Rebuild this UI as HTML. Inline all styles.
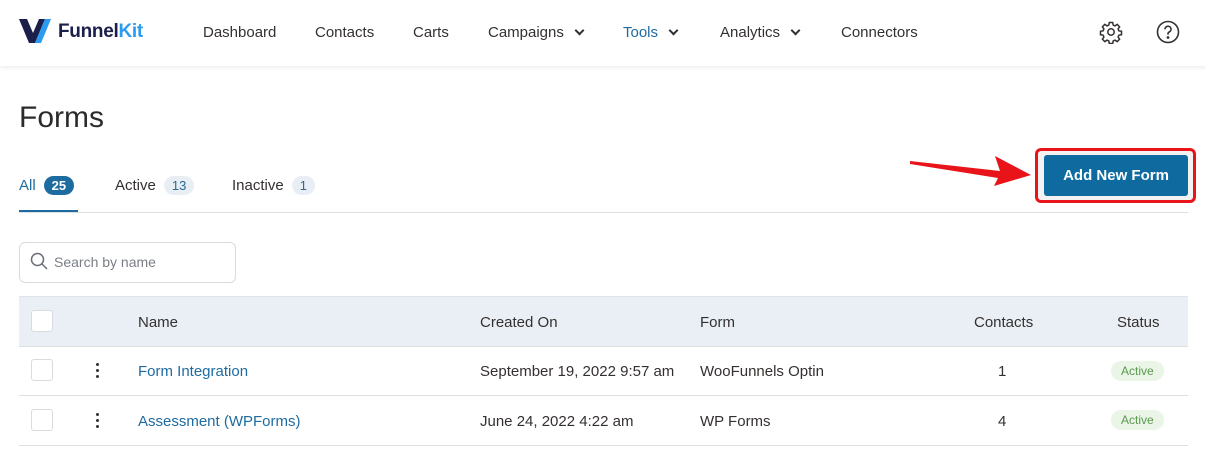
<!DOCTYPE html><html><head><style>
*{box-sizing:border-box;margin:0;padding:0}
body{width:1206px;height:450px;background:#fff;font-family:"Liberation Sans",sans-serif;color:#353030;position:relative;overflow:hidden}
.a{position:absolute}
.hdr{left:0;top:0;width:1206px;height:66px;background:#fff;box-shadow:0 2px 4px rgba(0,0,0,.07)}
.nav{top:24px;font-size:15px;color:#353030}
.chev{display:inline-block;width:7px;height:7px;border-right:2px solid #353030;border-bottom:2px solid #353030;transform:rotate(45deg);margin-left:12px;position:relative;top:-3px}
.tab{top:176px;font-size:15px}
.badge{display:inline-block;border-radius:11px;padding:2px 8px;font-size:13px;margin-left:8px;background:#e8eef3;color:#2a6a93}
.cb{width:22px;height:22px;border:1px solid #d8dce0;border-radius:3px;background:#fff}
.row{font-size:15px}
.lnk{color:#1e6ba1}
.st{background:#eaf5e7;color:#5a9a4c;font-size:12px;border-radius:10px;padding:3px 10px}
.dots{width:3px}
.dots i{display:block;width:3px;height:3px;background:#353030;border-radius:50%;margin-bottom:3px}
</style></head><body>
<div class="a hdr"></div>
<svg class="a" style="left:19px;top:19px" width="36" height="24" viewBox="0 0 36 24"><path d="M0 0h8l6 14 6-14h6l-10 24h-6z" fill="#1c1f4a"/><path d="M26 0h6l-10 24h-6z" fill="#2a9bf0"/></svg>
<div class="a" style="left:58px;top:21px;font-size:19px;font-weight:bold;color:#1c1f4a;letter-spacing:-.3px">Funnel<span style="color:#2a9bf0">Kit</span></div>
<div class="a nav" style="left:203px">Dashboard</div>
<div class="a nav" style="left:315px">Contacts</div>
<div class="a nav" style="left:413px">Carts</div>
<div class="a nav" style="left:488px">Campaigns<span class="chev"></span></div>
<div class="a nav" style="left:623px;color:#1e6ba1">Tools<span class="chev"></span></div>
<div class="a nav" style="left:720px">Analytics<span class="chev"></span></div>
<div class="a nav" style="left:841px">Connectors</div>
<svg class="a" style="left:1099px;top:20px" width="24" height="24" viewBox="0 0 24 24" fill="none" stroke="#353030" stroke-width="1.5"><circle cx="12" cy="12" r="3.2"/><path d="M10.3 2.5h3.4l.5 2.6 1.8.8 2.2-1.5 2.4 2.4-1.5 2.2.8 1.8 2.6.5v3.4l-2.6.5-.8 1.8 1.5 2.2-2.4 2.4-2.2-1.5-1.8.8-.5 2.6h-3.4l-.5-2.6-1.8-.8-2.2 1.5-2.4-2.4 1.5-2.2-.8-1.8-2.6-.5v-3.4l2.6-.5.8-1.8-1.5-2.2 2.4-2.4 2.2 1.5 1.8-.8z"/></svg>
<svg class="a" style="left:1156px;top:20px" width="24" height="24" viewBox="0 0 24 24" fill="none" stroke="#353030" stroke-width="1.6"><circle cx="12" cy="12" r="10.5"/><path d="M9 9.3a3 3 0 1 1 4.2 2.7c-.9.4-1.2 1-1.2 2v.6"/><circle cx="12" cy="17.5" r=".6" fill="#353030"/></svg>
<div class="a" style="left:19px;top:101px;font-size:30px;color:#2c2a2a">Forms</div>
<div class="a tab" style="left:19px;color:#1e6ba1">All<span class="badge" style="background:#1e6ba1;color:#fff;font-weight:bold">25</span></div>
<div class="a" style="left:19px;top:210px;width:59px;height:3px;background:#1e6ba1"></div>
<div class="a tab" style="left:115px">Active<span class="badge">13</span></div>
<div class="a tab" style="left:232px">Inactive<span class="badge">1</span></div>
<div class="a" style="left:19px;top:212px;width:1169px;height:1px;background:#dde0e3"></div>
<svg class="a" style="left:908px;top:153px" width="125" height="34" viewBox="0 0 125 34"><path d="M2 8 L92 18 L87 3 L123 22 L86 33 L90 25 L2 11z" fill="#e8141a"/></svg>
<div class="a" style="left:1035px;top:148px;width:161px;height:55px;border:3px solid #e8141a;border-radius:6px;background:#f2f2f2"></div>
<div class="a" style="left:1044px;top:155px;width:144px;height:41px;background:#0f6b9f;border-radius:3px;color:#fff;font-weight:bold;font-size:15px;text-align:center;line-height:41px">Add New Form</div>
<div class="a" style="left:19px;top:242px;width:217px;height:41px;border:1px solid #d8dce0;border-radius:6px"></div>
<svg class="a" style="left:30px;top:252px" width="18" height="18" viewBox="0 0 18 18" fill="none" stroke="#6a6f75" stroke-width="1.5"><circle cx="7.5" cy="7.5" r="6"/><path d="M12 12l5 5"/></svg>
<div class="a" style="left:54px;top:254px;font-size:14px;color:#7a7f85">Search by name</div>
<div class="a" style="left:19px;top:296px;width:1169px;height:50px;background:#e9eff4;border-top:1px solid #dde3e8"></div>
<div class="a" style="left:19px;top:346px;width:1169px;height:1px;background:#dde0e3"></div>
<div class="a" style="left:19px;top:395px;width:1169px;height:1px;background:#dde0e3"></div>
<div class="a" style="left:19px;top:445px;width:1169px;height:1px;background:#dde0e3"></div>
<div class="a cb" style="left:31px;top:310px"></div>
<div class="a row" style="left:138px;top:314px">Name</div>
<div class="a row" style="left:480px;top:314px">Created On</div>
<div class="a row" style="left:700px;top:314px">Form</div>
<div class="a row" style="left:974px;top:314px">Contacts</div>
<div class="a row" style="left:1117px;top:314px">Status</div>
<div class="a cb" style="left:31px;top:359px"></div>
<div class="a dots" style="left:96px;top:363px"><i></i><i></i><i></i></div>
<div class="a row lnk" style="left:138px;top:363px">Form Integration</div>
<div class="a row" style="left:480px;top:363px">September 19, 2022 9:57 am</div>
<div class="a row" style="left:700px;top:363px">WooFunnels Optin</div>
<div class="a row" style="left:998px;top:363px">1</div>
<div class="a st" style="left:1111px;top:361px">Active</div>
<div class="a cb" style="left:31px;top:409px"></div>
<div class="a dots" style="left:96px;top:413px"><i></i><i></i><i></i></div>
<div class="a row lnk" style="left:138px;top:413px">Assessment (WPForms)</div>
<div class="a row" style="left:480px;top:413px">June 24, 2022 4:22 am</div>
<div class="a row" style="left:700px;top:413px">WP Forms</div>
<div class="a row" style="left:998px;top:413px">4</div>
<div class="a st" style="left:1111px;top:410px">Active</div>
</body></html>
